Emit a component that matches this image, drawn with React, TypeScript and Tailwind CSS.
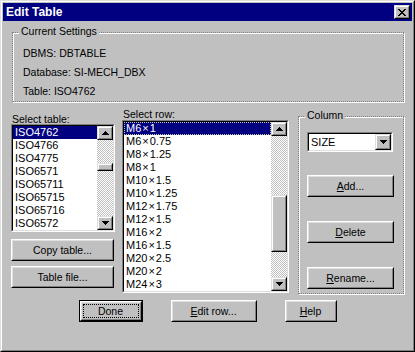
import React from "react";

const raisedOuter =
  "border border-t-white border-l-white border-r-black border-b-black";
const raisedInner =
  "border border-t-[#dfdfdf] border-l-[#dfdfdf] border-r-[#808080] border-b-[#808080]";
const sbOuter =
  "border border-t-[#dfdfdf] border-l-[#dfdfdf] border-r-black border-b-black";
const sbInner =
  "border border-t-white border-l-white border-r-[#808080] border-b-[#808080]";
const dither =
  "bg-[image:repeating-conic-gradient(#c0c0c0_0%_25%,#ffffff_0%_50%)] bg-[length:2px_2px]";

const X_ROWS = ["##....##", ".##..##.", "..####..", "...##...", "..####..", ".##..##.", "##....##"];

function CloseX() {
  const rects: React.ReactElement[] = [];
  X_ROWS.forEach((r, y) =>
    r.split("").forEach((c, x) => {
      if (c === "#") rects.push(<rect key={`${x}-${y}`} x={x} y={y} width={1} height={1} fill="#000" />);
    })
  );
  return (
    <svg width="8" height="7" viewBox="0 0 8 7" shapeRendering="crispEdges">
      {rects}
    </svg>
  );
}

function UpArrow() {
  return (
    <svg width="7" height="4" viewBox="0 0 7 4" shapeRendering="crispEdges">
      <path d="M3 0h1v1h1v1h1v1h1v1H0V3h1V2h1V1h1z" fill="#000" />
    </svg>
  );
}
function DownArrow() {
  return (
    <svg width="7" height="4" viewBox="0 0 7 4" shapeRendering="crispEdges">
      <path d="M0 0h7v1h-1v1h-1v1h-1v1h-1v-1h-1v-1h-1v-1h-1z" fill="#000" />
    </svg>
  );
}

function SbButton({ up }: { up?: boolean }) {
  return (
    <div className={`${sbOuter} h-[14px] w-[16px] bg-[#c0c0c0] shrink-0`}>
      <div className={`${sbInner} h-full w-full flex items-center justify-center`}>
        {up ? <UpArrow /> : <DownArrow />}
      </div>
    </div>
  );
}

function Thumb({ h }: { h: string }) {
  return (
    <div className={`${sbOuter} ${h} w-[16px] bg-[#c0c0c0] shrink-0`}>
      <div className={`${sbInner} h-full w-full`} />
    </div>
  );
}

function Btn({
  className,
  children,
}: {
  className: string;
  children: React.ReactNode;
}) {
  return (
    <div className={`${raisedOuter} ${className} h-[22px] bg-[#c0c0c0]`}>
      <div className={`${raisedInner} h-full w-full flex items-center justify-center text-[10.5px] leading-none text-black`}>
        {children}
      </div>
    </div>
  );
}

function Sunken({ className, children }: { className: string; children: React.ReactNode }) {
  return (
    <div className={`border border-t-[#808080] border-l-[#808080] border-b-white border-r-white ${className}`}>
      <div className="border border-t-black border-l-black border-b-[#dfdfdf] border-r-[#dfdfdf] bg-white h-full w-full flex">
        {children}
      </div>
    </div>
  );
}

function Mult({ s }: { s: string }) {
  const [a, b] = s.split("×");
  return (
    <>
      {a}
      <span className="mx-[1px]">×</span>
      {b}
    </>
  );
}

const tables = ["ISO4762", "ISO4766", "ISO4775", "ISO6571", "ISO65711", "ISO65715", "ISO65716", "ISO6572"];
const rows = [
  "M6×1",
  "M6×0.75",
  "M8×1.25",
  "M8×1",
  "M10×1.5",
  "M10×1.25",
  "M12×1.75",
  "M12×1.5",
  "M16×2",
  "M16×1.5",
  "M20×2.5",
  "M20×2",
  "M24×3",
];

export default function App() {
  return (
    <div className="w-[415px] h-[352px] bg-[#c0c0c0] border border-t-[#dfdfdf] border-l-[#dfdfdf] border-r-black border-b-black font-['Liberation_Sans',Arial,sans-serif] text-black select-none">
      <div className="h-full w-full border border-t-white border-l-white border-r-[#808080] border-b-[#808080] p-[1px] flex flex-col">
        {/* Title bar */}
        <div className="h-[18px] shrink-0 bg-[#000080] flex items-center justify-between pl-[3px] pr-[2px]">
          <span className="text-white font-bold text-[12px] leading-none">Edit Table</span>
          <div className={`${sbOuter} h-[14px] w-[16px] bg-[#c0c0c0]`}>
            <div className={`${sbInner} h-full w-full flex items-center justify-center`}>
              <CloseX />
            </div>
          </div>
        </div>

        {/* Current settings */}
        <div className="relative mt-[11px] ml-[9px] w-[392px] h-[70px] shrink-0 border border-dotted border-[#808080] shadow-[1px_1px_0_#ffffff,inset_1px_1px_0_#ffffff]">
          <span className="absolute left-[6px] -top-[8px] px-[2px] bg-[#c0c0c0] text-[10.5px] leading-[13px]">
            Current Settings
          </span>
          <div className="pt-[11px] pl-[10px] text-[10.5px]">
            <div className="h-[19px] leading-[19px]">DBMS: DBTABLE</div>
            <div className="h-[19px] leading-[19px]">Database: SI-MECH_DBX</div>
            <div className="h-[19px] leading-[19px]">Table: ISO4762</div>
          </div>
        </div>

        {/* Main row */}
        <div className="flex h-[192px] shrink-0">
          {/* Select table */}
          <div className="ml-[8px] mt-[11px] w-[104px] flex flex-col">
            <div className="h-[11px] leading-[13px] pl-[1px] text-[10.5px]">Select table:</div>
            <Sunken className="h-[108px] w-[104px]">
              <div className="flex-1 flex flex-col text-[11px]">
                {tables.map((t, i) => (
                  <div
                    key={t}
                    className={`h-[13px] leading-[13px] pl-[2px] ${i === 0 ? "bg-[#000080] text-white" : ""}`}
                  >
                    {t}
                  </div>
                ))}
              </div>
              <div className="w-[16px] flex flex-col">
                <SbButton up />
                <div className={`h-[23px] ${dither}`} />
                <Thumb h="h-[8px]" />
                <div className={`flex-1 ${dither}`} />
                <SbButton />
              </div>
            </Sunken>
            <Btn className="mt-[7px] w-[103px]">Copy table...</Btn>
            <Btn className="mt-[5px] w-[103px]">Table file...</Btn>
          </div>

          {/* Select row */}
          <div className="ml-[7px] mt-[6px] w-[167px] flex flex-col">
            <div className="h-[12px] leading-[13px] pl-[1px] text-[10.5px]">Select row:</div>
            <Sunken className="h-[173px] w-[167px]">
              <div className="flex-1 flex flex-col text-[11px]">
                {rows.map((r, i) => (
                  <div
                    key={r}
                    className={`relative h-[13px] leading-[13px] pl-[2px] whitespace-nowrap ${
                      i === 0 ? "bg-[#000080] text-white" : ""
                    }`}
                  >
                    <Mult s={r} />
                    {i === 0 && (
                      <span className="absolute inset-0 border border-dotted border-[#c8c8a0]" />
                    )}
                  </div>
                ))}
              </div>
              <div className="w-[16px] flex flex-col">
                <SbButton up />
                <div className={`h-[59px] ${dither}`} />
                <Thumb h="h-[57px]" />
                <div className={`flex-1 ${dither}`} />
                <SbButton />
              </div>
            </Sunken>
          </div>

          {/* Column group */}
          <div className="relative ml-[9px] mt-[14px] w-[106px] h-[178px] border border-dotted border-[#808080] shadow-[1px_1px_0_#ffffff,inset_1px_1px_0_#ffffff] flex flex-col">
            <span className="absolute left-[6px] -top-[8px] px-[2px] bg-[#c0c0c0] text-[10.5px] leading-[13px]">
              Column
            </span>
            <Sunken className="ml-[8px] mt-[15px] w-[86px] h-[20px]">
              <div className="flex-1 pl-[2px] text-[11px] leading-[16px]">SIZE</div>
              <div className={`${sbOuter} w-[16px] h-[16px] bg-[#c0c0c0]`}>
                <div className={`${sbInner} h-full w-full flex items-center justify-center`}>
                  <DownArrow />
                </div>
              </div>
            </Sunken>
            <Btn className="ml-[8px] mt-[23px] w-[87px]">
              <span className="underline">A</span>dd...
            </Btn>
            <Btn className="ml-[8px] mt-[24px] w-[87px]">
              <span className="underline">D</span>elete
            </Btn>
            <Btn className="ml-[8px] mt-[24px] w-[87px]">
              <span className="underline">R</span>ename...
            </Btn>
          </div>
        </div>

        {/* Bottom buttons */}
        <div className="mt-[6px] flex justify-center gap-[28px]">
          <div className="w-[64px] h-[22px] border border-black">
            <div className="h-full w-full border border-t-white border-l-white border-r-black border-b-black bg-[#c0c0c0]">
              <div className={`${raisedInner} h-full w-full p-[1px]`}>
                <div className="h-full w-full border border-dotted border-black flex items-center justify-center text-[10.5px] leading-none">
                  Done
                </div>
              </div>
            </div>
          </div>
          <Btn className="w-[86px]">
            <span className="underline">E</span>dit row...
          </Btn>
          <Btn className="w-[52px]">
            <span className="underline">H</span>elp
          </Btn>
        </div>
      </div>
    </div>
  );
}
